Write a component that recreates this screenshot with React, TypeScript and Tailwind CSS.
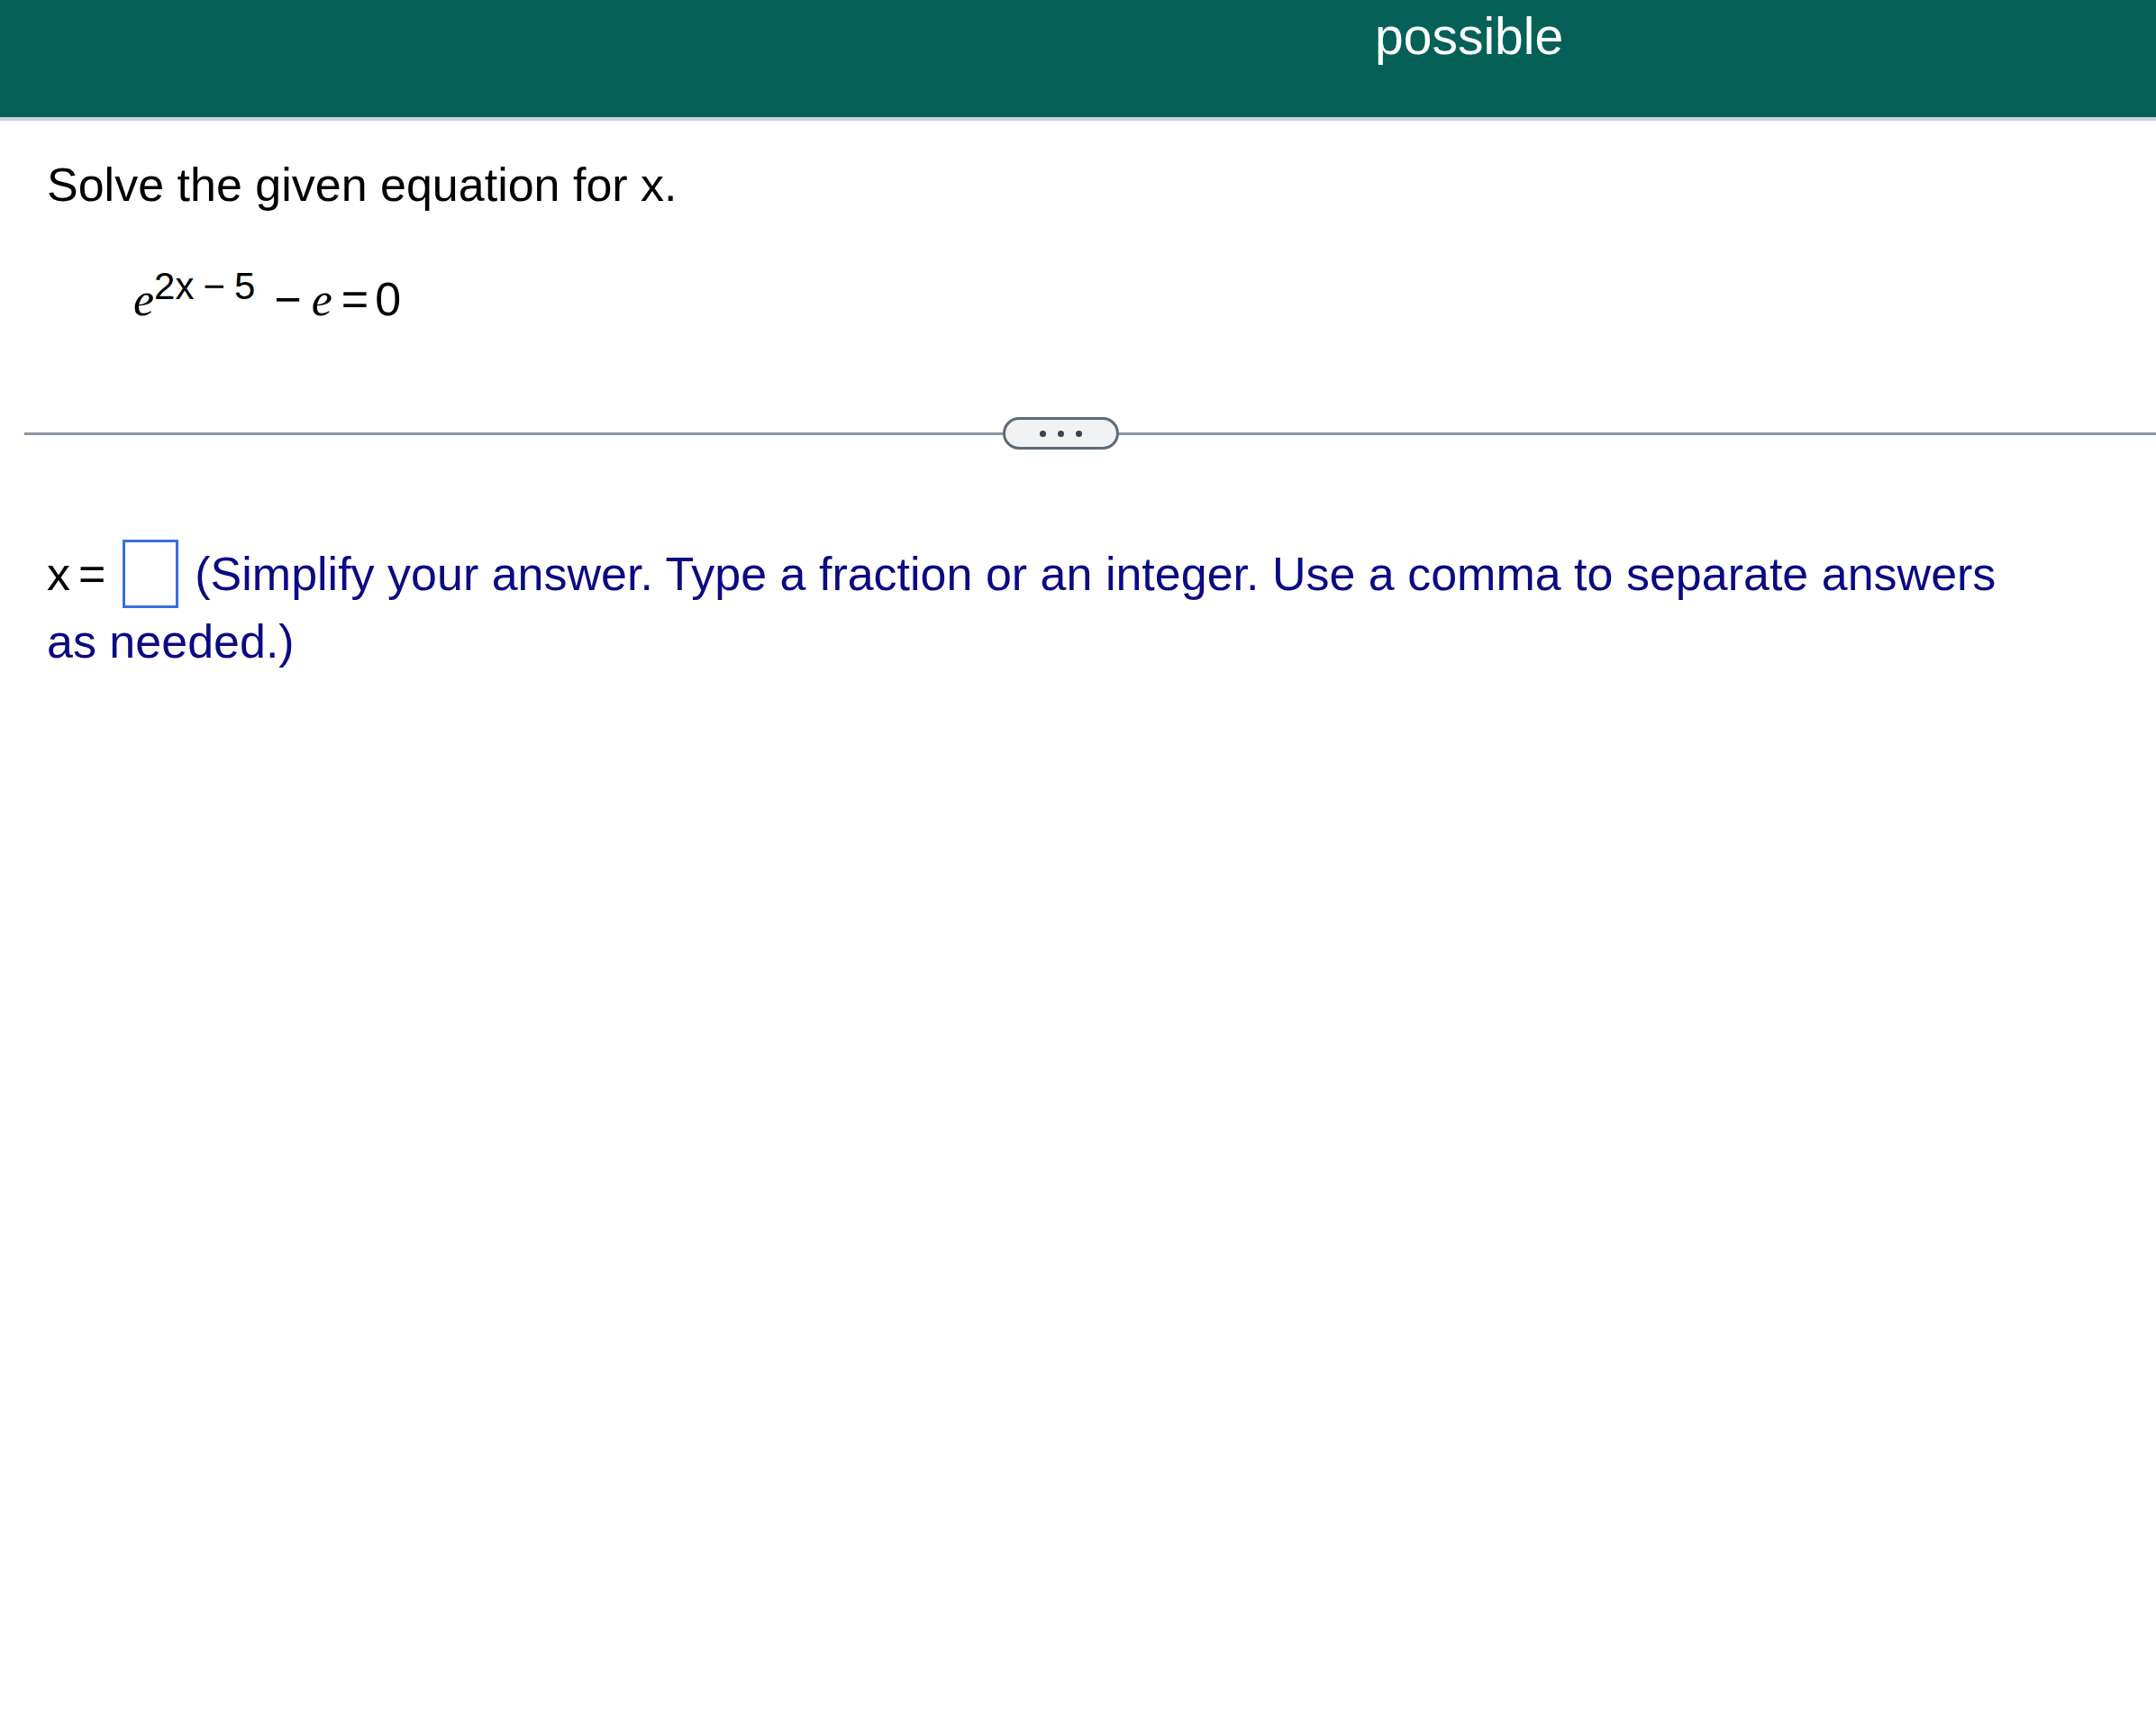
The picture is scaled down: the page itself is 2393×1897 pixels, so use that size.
export default function App() {
  return (
    <div className="min-h-screen bg-white font-['Liberation_Sans',Arial,sans-serif]">
      {/* top bar, title text is cut off in the screenshot */}
      <header className="h-[134px] border-b-4 border-[#c9d1dc] bg-[#056157]">
        <div className="ml-[1526px] pt-[12px] text-[57px] leading-none text-white">possible</div>
      </header>

      <main>
        <div className="px-[52px]">
          <p className="mt-[45px] text-[52px] leading-none text-black">Solve the given equation for x.</p>

          <div className="mt-[66px] ml-[96px] text-[52px] leading-none text-black whitespace-nowrap">
            <span className="font-['Liberation_Serif',serif] italic">e</span>
            <span className="text-[42px] leading-none align-[18px]">
              2x<span className="ml-[10px]">−</span>
              <span className="ml-[10px]">5</span>
            </span>
            <span className="ml-[21px]">−</span>
            <span className="ml-[11px] font-['Liberation_Serif',serif] italic">e</span>
            <span className="ml-[10px]">=</span>
            <span className="ml-[7px]">0</span>
          </div>
        </div>

        {/* collapsible divider */}
        <div className="mt-[104px] ml-[27px] flex items-center">
          <div className="h-[3px] w-[1086px] bg-[#8b95a5]" />
          <button className="flex h-[36px] w-[129px] items-center justify-center gap-[13px] rounded-full border-[3px] border-[#5e6a78] bg-[#f1f2f4]">
            <span className="h-[7px] w-[7px] rounded-full bg-[#3a4350]" />
            <span className="h-[7px] w-[7px] rounded-full bg-[#3a4350]" />
            <span className="h-[7px] w-[7px] rounded-full bg-[#3a4350]" />
          </button>
          <div className="h-[3px] flex-1 bg-[#8b95a5]" />
        </div>

        <div className="pl-[52px] pr-[140px]">
          <p className="mt-[100px] text-[52px] leading-[74px] text-[#0a0a85]">
            <span className="text-black">
              x<span className="ml-[9px]">=</span>
            </span>{' '}
            <span className="ml-[4px] inline-block h-[76px] w-[62px] border-[3px] border-[#3a6fd8] bg-white align-[-20px]" />{' '}
            <span className="ml-[4px]">
              (Simplify your answer. Type a fraction or an integer. Use a comma to separate answers as needed.)
            </span>
          </p>
        </div>
      </main>
    </div>
  );
}
